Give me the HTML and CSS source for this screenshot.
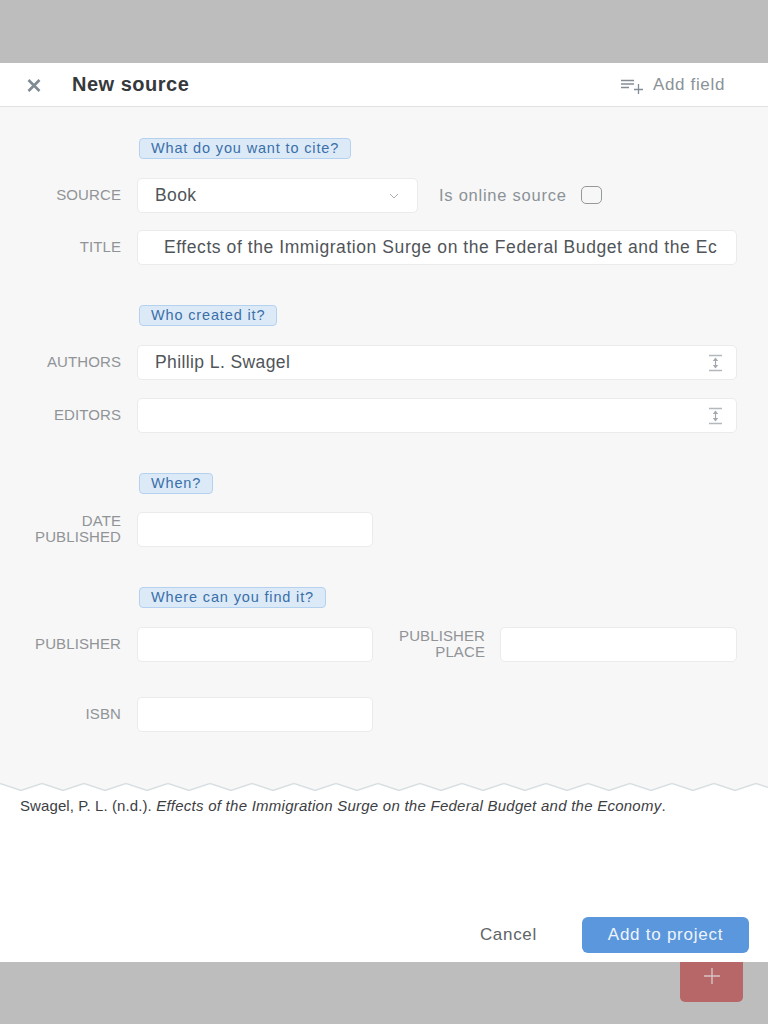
FILE: index.html
```html
<!DOCTYPE html>
<html lang="en">
<head>
<meta charset="utf-8">
<title>New source</title>
<link rel="stylesheet" href="styles.css">
</head>
<body>
<div class="fab"><svg width="18" height="18" viewBox="0 0 18 18"><path d="M9 1v16M1 9h16" stroke="#d6c4c4" stroke-width="1.4" fill="none"/></svg></div>
<main class="modal">
  <header class="head">
    <svg class="close" width="16" height="16" viewBox="0 0 16 16"><path d="M2.500 3l11 11M13.500 3l-11 11" stroke="#7f8a93" stroke-width="2.6" fill="none"/></svg>
    <h1 class="title">New source</h1>
    <div class="add">
      <svg width="22" height="15" viewBox="0 0 22 15"><path d="M0 1.500h13M0 5h13M0 8.500h8M17.500 5v10M13 10.500h9" stroke="#848d95" stroke-width="1.300" fill="none"/></svg>
      <span>Add field</span>
    </div>
  </header>
  <section class="form">
    <div class="tagrow first"><span class="tag">What do you want to cite?</span></div>
    <div class="row tight">
      <label class="lab">SOURCE</label>
      <div class="field half select"><span class="val">Book</span>
        <svg width="10" height="6" viewBox="0 0 10 6"><path d="M1 1l4 4 4-4" stroke="#a9afb4" stroke-width="1" fill="none"/></svg>
      </div>
      <span class="online">Is online source</span>
      <span class="check"></span>
    </div>
    <div class="row">
      <label class="lab">TITLE</label>
      <div class="field wide titlefield"><span class="val">Effects of the Immigration Surge on the Federal Budget and the Ec</span></div>
    </div>
    <div class="tagrow"><span class="tag">Who created it?</span></div>
    <div class="row">
      <label class="lab">AUTHORS</label>
      <div class="field wide between"><span class="val">Phillip L. Swagel</span>
        <svg class="expand" width="13" height="18" viewBox="0 0 13 18"><path d="M0 1.500h13M0 16.500h13" stroke="#b3b8bc" stroke-width="1.300" fill="none"/><path d="M6.500 4.500v9" stroke="#a3a9ae" stroke-width="1.200"/><path d="M3.800 7l2.700-3.500L9.200 7zM3.800 11l2.700 3.500L9.200 11z" fill="#a3a9ae"/></svg>
      </div>
    </div>
    <div class="row">
      <label class="lab">EDITORS</label>
      <div class="field wide between"><span class="val"></span>
        <svg class="expand" width="13" height="18" viewBox="0 0 13 18"><path d="M0 1.500h13M0 16.500h13" stroke="#b3b8bc" stroke-width="1.300" fill="none"/><path d="M6.500 4.500v9" stroke="#a3a9ae" stroke-width="1.200"/><path d="M3.800 7l2.700-3.500L9.200 7zM3.800 11l2.700 3.500L9.200 11z" fill="#a3a9ae"/></svg>
      </div>
    </div>
    <div class="tagrow"><span class="tag">When?</span></div>
    <div class="row date">
      <label class="lab">DATE<br>PUBLISHED</label>
      <div class="field half2"></div>
    </div>
    <div class="tagrow"><span class="tag">Where can you find it?</span></div>
    <div class="row">
      <label class="lab">PUBLISHER</label>
      <div class="field half2"></div>
      <label class="lab lab2">PUBLISHER<br>PLACE</label>
      <div class="field half3"></div>
    </div>
    <div class="row isbn">
      <label class="lab">ISBN</label>
      <div class="field half2"></div>
    </div>
  </section>
  <svg class="wave" width="768" height="12" viewBox="0 0 768 12">
    <defs><pattern id="zig" width="42" height="12" patternUnits="userSpaceOnUse"><path d="M0 0H42V1.500L21 8.500L0 1.500Z" fill="#f7f7f7"/><path d="M0 1.500L21 8.500L42 1.500" stroke="#d8dfe2" stroke-width="1.500" fill="none"/></pattern></defs>
    <rect width="768" height="12" fill="url(#zig)"/>
  </svg>
  <p class="cite">Swagel, P. L. (n.d.). <em class="work">Effects of the Immigration Surge on the Federal Budget and the Economy</em>.</p>
  <footer class="foot">
    <span class="cancel">Cancel</span>
    <span class="btn">Add to project</span>
  </footer>
</main>
</body>
</html>
```
FILE: styles.css
```css
* { box-sizing: border-box; }
html, body { margin: 0; height: 1024px; overflow: hidden; }
body { background: #bdbdbd; font-family: "Liberation Sans", Arial, sans-serif; position: relative; padding-top: 63px; }
.fab { position: absolute; left: 680px; top: 950px; width: 63px; height: 52px; background: #b76767; border-radius: 5px; display: flex; align-items: center; justify-content: center; }
.modal { position: relative; background: #fff; height: 899px; display: flex; flex-direction: column; }
.head { height: 44px; flex: none; display: flex; align-items: center; border-bottom: 1px solid #dfe1e2; padding-left: 26px; }
.close { margin-right: 30px; margin-top: 1px; }
.title { margin: 0; font-size: 20px; font-weight: 700; color: #36393c; letter-spacing: 0.5px; }
.add { margin-left: auto; display: flex; align-items: center; gap: 10px; margin-right: 43px; color: #8b9298; font-size: 17px; letter-spacing: 0.65px; }
.add svg { margin-top: 3px; }
.form { background: #f7f7f7; height: 675px; flex: none; padding-top: 31px; display: flex; flex-direction: column; }
.tagrow { padding-left: 139px; margin-top: 22px; height: 21px; margin-bottom: 19px; display: flex; }
.tagrow.first { margin-top: 0; }
.tag { height: 21px; border: 1px solid #b4d2ef; border-radius: 4px; background: #dceaf8; color: #3a6fa8; font-size: 14.500px; line-height: 18px; padding: 0 11px; letter-spacing: 0.85px; white-space: nowrap; }
.row { display: flex; align-items: center; height: 35px; margin-bottom: 18px; }
.row.tight { margin-bottom: 17px; }
.row.date { margin-top: -1px; }
.row.isbn { margin-top: 17px; }
.lab { width: 121px; flex: none; margin-right: 16px; margin-top: -1px; text-align: right; font-size: 15px; line-height: 16px; color: #909497; letter-spacing: 0.1px; }
.lab.lab2 { width: 112px; margin-right: 15px; }
.field { height: 35px; background: #fff; border: 1px solid #ebebeb; border-radius: 5px; display: flex; align-items: center; flex: none; }
.half { width: 281px; }
.half2 { width: 236px; }
.half3 { width: 237px; }
.wide { width: 600px; }
.select { padding: 0 18px 0 17px; justify-content: space-between; }
.between { padding: 0 14px 0 17px; justify-content: space-between; }
.titlefield { padding-left: 26px; }
.val { font-size: 17.500px; color: #505559; letter-spacing: 0.4px; white-space: nowrap; margin-top: -1px; }
.titlefield .val { letter-spacing: 0.57px; }
.online { margin-left: 21px; margin-top: -1px; color: #8b9298; font-size: 16.500px; letter-spacing: 0.75px; white-space: nowrap; }
.check { width: 21px; height: 18px; margin-left: 14px; margin-top: -1px; border: 1.300px solid #94999d; border-radius: 5px; background: #f7f7f7; }
.wave { display: block; flex: none; }
.cite { margin: 3px 0 0 20px; font-size: 15px; line-height: 18px; color: #3d4043; letter-spacing: 0.1px; white-space: nowrap; }
.work { letter-spacing: 0.25px; }
.foot { margin-top: auto; display: flex; align-items: center; justify-content: flex-end; padding: 0 19px 9px 0; }
.cancel { color: #5f6468; font-size: 17px; letter-spacing: 0.7px; margin-right: 45px; }
.btn { width: 167px; height: 36px; background: #5b97dc; border-radius: 6px; color: #eef4fb; font-size: 17px; letter-spacing: 0.75px; display: flex; align-items: center; justify-content: center; }
```
